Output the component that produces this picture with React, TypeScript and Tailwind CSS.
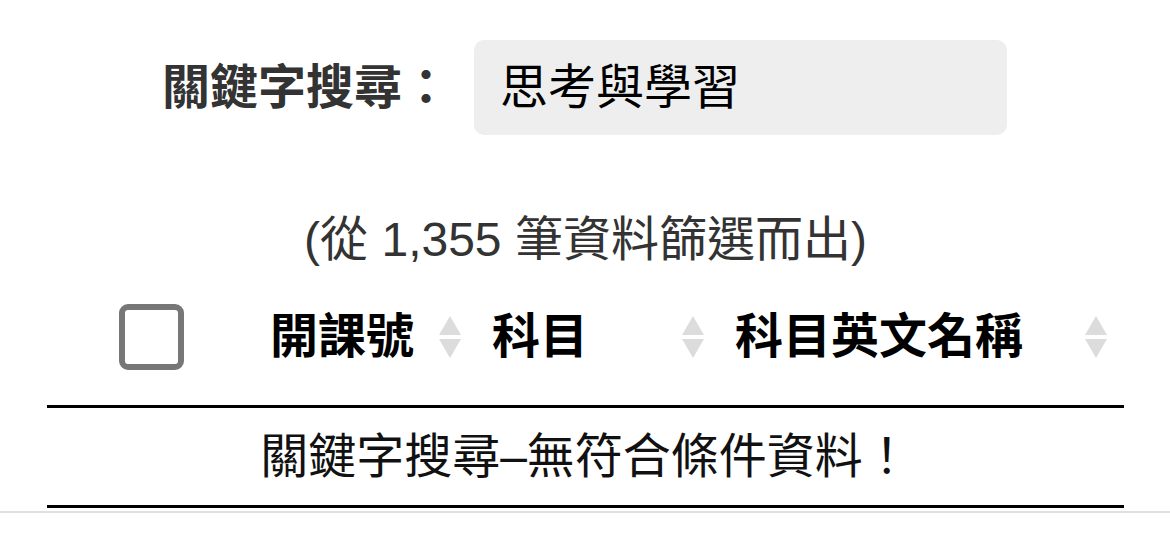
import React from 'react'

const FONT = { fontFamily: '"Liberation Sans", "Noto Sans CJK TC", sans-serif' }

function SortIcon() {
  return (
    <svg width="24" height="44" viewBox="0 0 24 44" className="shrink-0">
      <polygon points="12,1 23,20 1,20" fill="#dcdcdc" />
      <polygon points="1,24 23,24 12,43" fill="#dcdcdc" />
    </svg>
  )
}

const columns = [
  { key: 'id', label: '開課號', width: 'w-[222px]', pad: 'pr-[10px]' },
  { key: 'name', label: '科目', width: 'w-[243px]', pad: 'pr-[10px]' },
  { key: 'ename', label: '科目英文名稱', width: 'w-[409px]', pad: 'pr-[16px]' },
]

export default function App() {
  return (
    <div className="w-[1170px] h-[545px] bg-white overflow-hidden pt-[40px]" style={FONT}>
      {/* 關鍵字搜尋 */}
      <div className="flex items-center pl-[162px]">
        <label className="text-[48px] leading-[56px] font-bold text-[#333]">關鍵字搜尋：</label>
        <div className="ml-[24px] w-[533px] h-[95px] rounded-[10px] bg-[#eeeeee] flex items-center pl-[26px]">
          <span className="text-[48px] leading-[56px] text-black">思考與學習</span>
        </div>
      </div>

      {/* 篩選數量 */}
      <div className="ml-[47px] w-[1077px] mt-[77px] h-[56px] text-center text-[48px] leading-[56px] text-[#333]">
        (從 1,355 筆資料篩選而出)
      </div>

      {/* 表格 */}
      <table className="ml-[47px] mt-[22px] w-[1077px] table-fixed border-collapse">
        <thead>
          <tr className="border-b-[3px] border-black">
            <th className="w-[203px] pt-[14px] pb-[35px] align-middle">
              <div className="flex justify-center pl-[6px]">
                <span className="block w-[65px] h-[66px] rounded-[9px] border-[6px] border-[#777] bg-white" />
              </div>
            </th>
            {columns.map(c => (
              <th key={c.key} className={`${c.width} pt-[14px] pb-[35px] align-middle`}>
                <div className={`flex items-center justify-between pl-[20px] ${c.pad}`}>
                  <span className="text-[48px] leading-[56px] font-bold text-black">{c.label}</span>
                  <SortIcon />
                </div>
              </th>
            ))}
          </tr>
        </thead>
        <tbody>
          <tr className="border-b-[3px] border-black">
            <td colSpan={4} className="border-t border-[#eeeeee] h-[100px] text-center align-middle text-[48px] leading-[56px] text-[#111]">
              關鍵字搜尋–無符合條件資料！
            </td>
          </tr>
        </tbody>
      </table>
      <div className="mt-[3px] h-[2px] w-full bg-[#e0e0e0]" />
    </div>
  )
}
